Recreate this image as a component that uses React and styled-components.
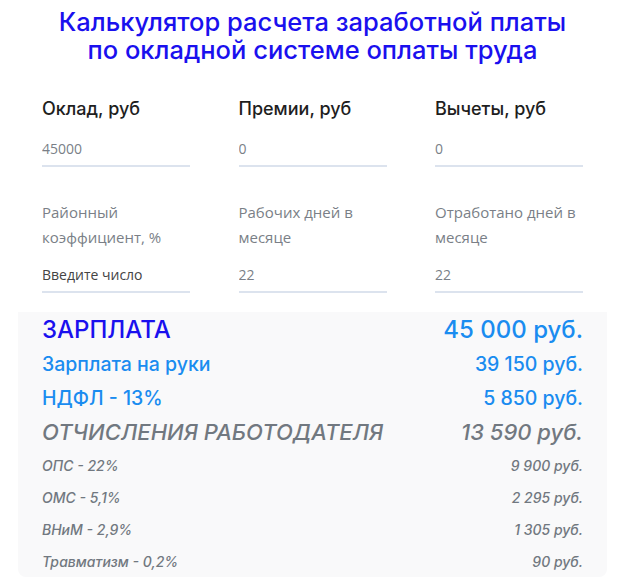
import React from "react";
import styled, { createGlobalStyle } from "styled-components";

const Global = createGlobalStyle`
  html, body { margin: 0; padding: 0; background: #fff; }
  body { font-family: "Open Sans", "Noto Sans", sans-serif; }
  * { box-sizing: border-box; }
`;

const Page = styled.div`
  width: 625px;
  padding: 8px 18px 0;
`;

const Title = styled.h1`
  margin: 0;
  text-align: center;
  color: #1a10ee;
  font-family: "Inter", sans-serif;
  font-weight: 500;
  font-size: 25.5px;
  line-height: 28px;
`;

const Grid = styled.div`
  display: grid;
  grid-template-columns: repeat(3, 148px);
  column-gap: 48.5px;
  padding: 0 24px;
  margin-top: 34px;
`;

const Field = styled.div`
  display: flex;
  flex-direction: column;
  margin-bottom: ${(p) => p.$gap || 0}px;
`;

const Label = styled.div`
  font-family: ${(p) => (p.$primary ? '"Inter", sans-serif' : "inherit")};
  font-size: ${(p) => (p.$primary ? 18 : 15)}px;
  line-height: ${(p) => (p.$primary ? 22 : 25)}px;
  color: ${(p) => (p.$primary ? "#1e1e1e" : "#7a7f87")};
  font-weight: ${(p) => (p.$primary ? 500 : 400)};
  min-height: ${(p) => (p.$primary ? 22 : 50)}px;
`;

const Input = styled.input`
  font-family: inherit;
  font-size: 14px;
  color: #7a7f87;
  border: 0;
  border-bottom: 2px solid #dce3ee;
  padding: 0 0 7px 0;
  margin-top: ${(p) => p.$top}px;
  background: transparent;
  outline: none;
  width: 148px;
  &::placeholder { color: #444; }
`;

const Panel = styled.div`
  margin-top: 19px;
  background: #f9f9fa;
  border-radius: 0 0 8px 8px;
  padding: 0 24px;
  display: flex;
  flex-direction: column;
  font-family: "Inter", sans-serif;
`;

const Row = styled.div`
  display: flex;
  justify-content: space-between;
  align-items: center;
  height: ${(p) => p.$h}px;
  font-size: ${(p) => p.$size}px;
  color: ${(p) => p.$color};
  font-style: ${(p) => (p.$italic ? "italic" : "normal")};
  font-weight: 500;
`;

const Name = styled.span`
  color: ${(p) => p.$color || "inherit"};
`;

const Amount = styled.span``;

const rows = [
  { name: "ЗАРПЛАТА", value: "45 000 руб.", size: 24, h: 35, color: "#1a8cf0", nameColor: "#1a10ee" },
  { name: "Зарплата на руки", value: "39 150 руб.", size: 19.5, h: 34, color: "#1a8cf0" },
  { name: "НДФЛ - 13%", value: "5 850 руб.", size: 19.5, h: 34, color: "#1a8cf0" },
  { name: "ОТЧИСЛЕНИЯ РАБОТОДАТЕЛЯ", value: "13 590 руб.", size: 22, h: 34, color: "#717880", italic: true },
  { name: "ОПС - 22%", value: "9 900 руб.", size: 14, h: 32, color: "#717880", italic: true },
  { name: "ОМС - 5,1%", value: "2 295 руб.", size: 14, h: 32, color: "#717880", italic: true },
  { name: "ВНиМ - 2,9%", value: "1 305 руб.", size: 14, h: 32, color: "#717880", italic: true },
  { name: "Травматизм - 0,2%", value: "90 руб.", size: 14, h: 32, color: "#717880", italic: true },
];

export default function App() {
  return (
    <Page>
      <Global />
      <Title>
        Калькулятор расчета заработной платы
        <br />
        по окладной системе оплаты труда
      </Title>
      <Grid>
        <Field $gap={33}>
          <Label $primary>Оклад, руб</Label>
          <Input $top={19} defaultValue="45000" />
        </Field>
        <Field $gap={33}>
          <Label $primary>Премии, руб</Label>
          <Input $top={19} defaultValue="0" />
        </Field>
        <Field $gap={33}>
          <Label $primary>Вычеты, руб</Label>
          <Input $top={19} defaultValue="0" />
        </Field>
        <Field>
          <Label>Районный коэффициент, %</Label>
          <Input $top={15} placeholder="Введите число" />
        </Field>
        <Field>
          <Label>Рабочих дней в месяце</Label>
          <Input $top={15} defaultValue="22" />
        </Field>
        <Field>
          <Label>Отработано дней в месяце</Label>
          <Input $top={15} defaultValue="22" />
        </Field>
      </Grid>
      <Panel>
        {rows.map((r) => (
          <Row key={r.name} $h={r.h} $size={r.size} $color={r.color} $italic={r.italic}>
            <Name $color={r.nameColor}>{r.name}</Name>
            <Amount>{r.value}</Amount>
          </Row>
        ))}
      </Panel>
    </Page>
  );
}
